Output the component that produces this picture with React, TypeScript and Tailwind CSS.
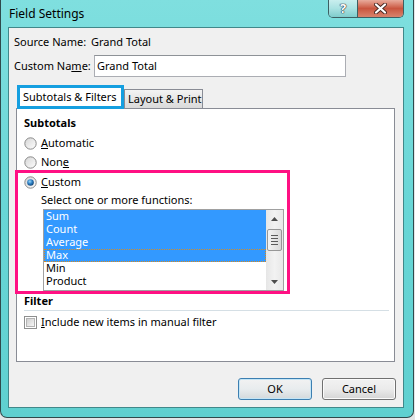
import React from 'react';

const font = { fontFamily: '"Noto Sans", "Open Sans", sans-serif' };

function Radio({ checked }: { checked?: boolean }) {
    return (
        <svg width="13" height="13" viewBox="0 0 13 13" className="shrink-0">
            <defs>
                <linearGradient id="rb" x1="0" y1="0" x2="1" y2="1">
                    <stop offset="0" stopColor="#d4d4d4" />
                    <stop offset="1" stopColor="#ffffff" />
                </linearGradient>
                <radialGradient id="rd" cx="0.4" cy="0.35" r="0.7">
                    <stop offset="0" stopColor="#9ad8f8" />
                    <stop offset="0.5" stopColor="#2d7fc4" />
                    <stop offset="1" stopColor="#10406e" />
                </radialGradient>
            </defs>
            <circle cx="6.5" cy="6.5" r="5.7" fill="url(#rb)" stroke="#8a8a8a" strokeWidth="1" />
            {checked && <circle cx="6.5" cy="6.5" r="3.3" fill="url(#rd)" />}
        </svg>
    );
}

function Checkbox() {
    return (
        <div className="w-[13px] h-[13px] shrink-0 border border-[#8e8f8f] bg-white p-[1px]">
            <div className="w-full h-full border border-[#b4b4b4] bg-gradient-to-br from-[#cfcfcf] to-[#f6f6f6]" />
        </div>
    );
}

function Arrow({ up }: { up?: boolean }) {
    return (
        <svg width="7" height="4" viewBox="0 0 7 4">
            <path d={up ? 'M0 4 L3.5 0 L7 4 Z' : 'M0 0 L3.5 4 L7 0 Z'} fill="#4d4d4d" />
        </svg>
    );
}

export default function App() {
    const items = ['Sum', 'Count', 'Average', 'Max', 'Min', 'Product'];

    return (
        <div className="w-[415px] h-[420px] bg-[#e2e5e7] overflow-hidden text-[11px] text-black whitespace-nowrap" style={font}>
            {/* Window frame */}
            <div className="w-[414px] h-[418px] rounded-b-[7px] border border-t-0 border-[#2f4a4c] bg-gradient-to-b from-[#7fdfdf] via-[#68d6d6] to-[#5fd0d0] flex flex-col pl-[7px] pr-[9px] pb-[9px]">
                {/* Title bar */}
                <div className="h-[27px] flex justify-between items-start shrink-0">
                    <div className="h-[27px] flex items-center pl-[1px] text-[12px]">Field Settings</div>
                    <div className="flex h-[18px] border border-t-0 border-[#3d5f62] rounded-b-[5px] overflow-hidden">
                        <div className="w-[29px] flex items-center justify-center bg-gradient-to-b from-[#c9eeee] via-[#a9e2e2] to-[#7fcccc] border-r border-[#3d5f62]">
                            <span
                                className="text-white font-bold text-[13px] leading-none"
                                style={{ textShadow: '0 0 1px #223, 0 0 1px #223, 0 0 1px #223' }}
                            >
                                ?
                            </span>
                        </div>
                        <div className="w-[45px] flex items-center justify-center bg-gradient-to-b from-[#e8ab9c] via-[#c9553f] to-[#d8836c]">
                            <svg width="13" height="11" viewBox="0 0 13 11">
                                <path d="M2 1.5 L11 9.5 M11 1.5 L2 9.5" stroke="#4a2a24" strokeWidth="4" strokeLinecap="round" />
                                <path d="M2 1.5 L11 9.5 M11 1.5 L2 9.5" stroke="#ffffff" strokeWidth="2.2" strokeLinecap="round" />
                            </svg>
                        </div>
                    </div>
                </div>

                {/* Client area */}
                <div className="flex-1 border border-[#41888a] bg-[#f0f0f0] flex flex-col">
                    <div className="mt-[6px] h-[16px] leading-[16px] flex pl-[5px]">
                        <span className="w-[77px] shrink-0">Source Name:</span>
                        <span>Grand Total</span>
                    </div>
                    <div className="mt-[5px] h-[22px] flex items-center pl-[5px]">
                        <span className="w-[80px] shrink-0">
                            Custom Na<span className="underline">m</span>e:
                        </span>
                        <div className="w-[252px] h-[22px] border border-[#abadb3] border-t-[#8e9297] bg-white pl-[2px] flex items-center">
                            Grand Total
                        </div>
                    </div>

                    {/* Tabs */}
                    <div className="mt-[8px] ml-[7px] h-[23px] flex items-end">
                        <div className="ml-[1px] w-[107px] h-[24px] -mb-[1px] border-[3px] border-[#159fe0] bg-white pl-[3px] flex items-center relative z-10">
                            Subtotals &amp; Filters
                        </div>
                        <div className="w-[79px] h-[19px] border border-b-0 border-[#898c95] bg-gradient-to-b from-[#f3f3f3] to-[#dadada] pl-[3px] flex items-center">
                            Layout &amp; Print
                        </div>
                    </div>

                    {/* Tab panel */}
                    <div className="ml-[7px] mr-[8px] h-[254px] border border-[#898c95] bg-white flex flex-col">
                        <div className="mt-[6px] pl-[7px] h-[16px] leading-[16px] font-bold">Subtotals</div>
                        <div className="mt-[3px] h-[19px] pl-[7px] flex items-center gap-[4px]">
                            <Radio />
                            <span><span className="underline">A</span>utomatic</span>
                        </div>
                        <div className="h-[19px] pl-[7px] flex items-center gap-[4px]">
                            <Radio />
                            <span>Non<span className="underline">e</span></span>
                        </div>

                        {/* Highlighted custom group */}
                        <div className="-mt-[2px] -ml-[2px] w-[275px] border-[3px] border-[#ff1083] flex flex-col">
                            <div className="h-[19px] pl-[6px] flex items-center gap-[4px]">
                                <Radio checked />
                                <span><span className="underline">C</span>ustom</span>
                            </div>
                            <div className="h-[16px] leading-[16px] pl-[23px]">Select one or more functions:</div>
                            <div className="mt-[1px] ml-[25px] w-[241px] h-[82px] border border-[#a0a0a0] bg-white flex">
                                <div className="flex-1 flex flex-col">
                                    {items.map((it, i) => (
                                        <div
                                            key={it}
                                            className={
                                                i < 4
                                                    ? i === 3
                                                        ? 'h-[13px] leading-[10px] pl-[1px] overflow-hidden bg-[#3399ff] text-white border border-dotted border-[#d98a1c]'
                                                        : 'h-[13px] leading-[12px] pl-[2px] overflow-hidden bg-[#3399ff] text-white'
                                                    : 'h-[13px] leading-[12px] pl-[2px] overflow-hidden'
                                            }
                                        >
                                            {it}
                                        </div>
                                    ))}
                                </div>
                                {/* Scrollbar */}
                                <div className="w-[17px] bg-gradient-to-r from-[#e6e6e6] via-[#f2f2f2] to-[#e8e8e8] flex flex-col">
                                    <div className="h-[17px] flex items-center justify-center">
                                        <Arrow up />
                                    </div>
                                    <div className="mt-[2px] mx-[1px] h-[22px] rounded-[2px] border border-[#979797] bg-gradient-to-r from-[#f3f3f3] to-[#d9d9d9] flex flex-col items-center justify-center gap-[2px]">
                                        <div className="w-[7px] h-px bg-[#5a5a5a]" />
                                        <div className="w-[7px] h-px bg-[#5a5a5a]" />
                                        <div className="w-[7px] h-px bg-[#5a5a5a]" />
                                        <div className="w-[7px] h-px bg-[#5a5a5a]" />
                                    </div>
                                    <div className="flex-1" />
                                    <div className="h-[17px] flex items-center justify-center">
                                        <Arrow />
                                    </div>
                                </div>
                            </div>
                        </div>

                        <div className="-mt-[1px] pl-[7px] h-[16px] leading-[16px] font-bold">Filter</div>
                        <div className="mt-[1px] ml-[7px] w-[365px] h-px bg-[#d5dfe5]" />
                        <div className="mt-[3px] h-[16px] pl-[7px] flex items-center gap-[4px]">
                            <Checkbox />
                            <span><span className="underline">I</span>nclude new items in manual filter</span>
                        </div>
                    </div>

                    {/* Buttons */}
                    <div className="mt-[16px] pr-[7px] flex justify-end gap-[10px]">
                        <button className="w-[74px] h-[22px] rounded-[3px] border border-[#3c7fb1] bg-gradient-to-b from-[#f2f2f2] via-[#e8ecee] to-[#d3d9dc] shadow-[inset_0_0_0_1px_#c4e5f6]">
                            OK
                        </button>
                        <button className="w-[74px] h-[22px] rounded-[3px] border border-[#707070] bg-gradient-to-b from-[#f2f2f2] via-[#ebebeb] to-[#d5d5d5] shadow-[inset_0_0_0_1px_#fbfbfb]">
                            Cancel
                        </button>
                    </div>
                </div>
            </div>
        </div>
    );
}
